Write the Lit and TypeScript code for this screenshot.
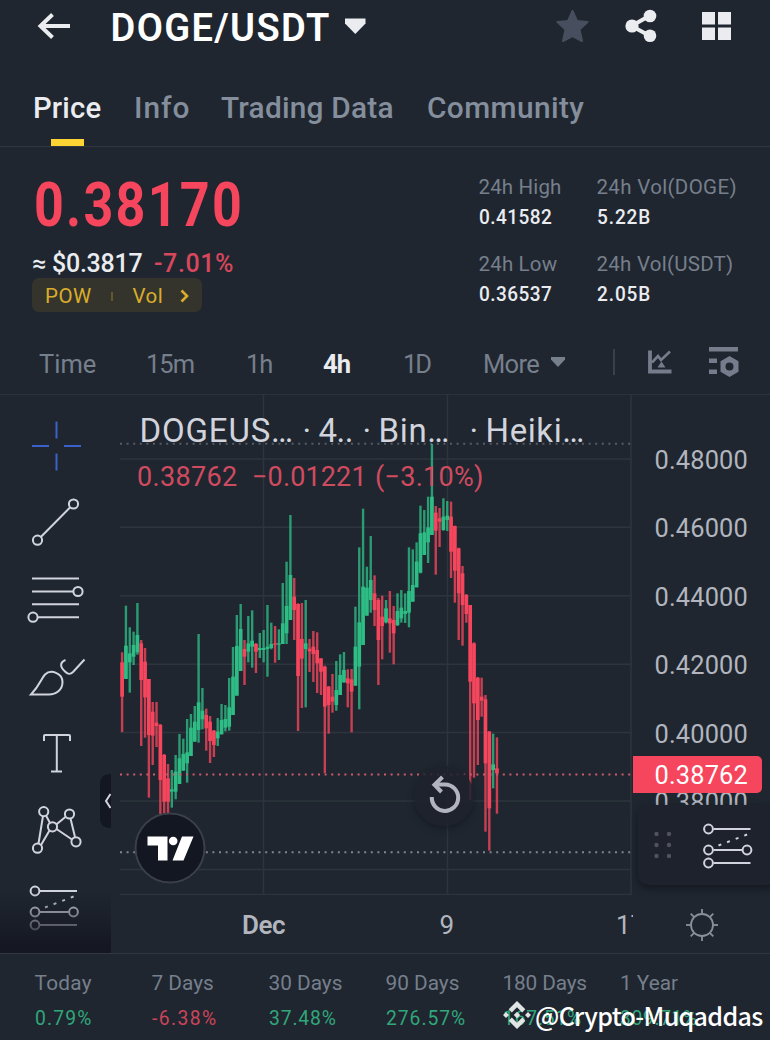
import { LitElement, html, svg, css } from "lit";
import { customElement, property } from "lit/decorators.js";

/** Single-line label tracked so that its text spans a given width. */
@customElement("fit-label")
class FitLabel extends LitElement {
  @property() text = "";
  @property({ type: Number }) width = 50;
  @property({ type: Number }) stretch = 1;

  static styles = css`
    :host { display: block; white-space: pre; }
    .t { display: inline-block; transform-origin: 0 50%; }
  `;

  updated() {
    const el = this.renderRoot.querySelector(".t") as HTMLElement;
    el.style.letterSpacing = "0px";
    const natural = el.offsetWidth;
    const gaps = Math.max(1, this.text.length - 1);
    el.style.letterSpacing = (this.width / this.stretch - natural) / gaps + "px";
    el.style.transform = this.stretch === 1 ? "none" : `scaleX(${this.stretch})`;
    this.style.width = this.width + "px";
  }

  render() {
    return html`<span class="t">${this.text}</span>`;
  }
}

const fit = (text: string, width: number, cls = "", stretch = 1) =>
  html`<fit-label class=${cls} .text=${text} .width=${width} .stretch=${stretch}></fit-label>`;

type Candle = [string, number, number, number, number];

// direction, high, body top, body bottom, low; thirds of a pixel below `base`
const FIRST: Candle[] = [
  ["r", 457, 487, 590, 696], ["g", 317, 437, 537, 537], ["g", 382, 460, 487, 578], ["g", 395, 435, 470, 495],
  ["g", 309, 405, 457, 464], ["r", 420, 430, 540, 738], ["r", 444, 485, 592, 713], ["r", 537, 537, 705, 893],
  ["r", 606, 635, 707, 795], ["r", 606, 668, 678, 741], ["r", 672, 675, 840, 942], ["r", 762, 765, 905, 940],
  ["r", 792, 835, 905, 940], ["g", 810, 868, 875, 923], ["g", 765, 815, 875, 898], ["g", 702, 775, 852, 852],
  ["g", 716, 762, 812, 812], ["g", 657, 757, 790, 848], ["g", 642, 683, 768, 768], ["g", 618, 665, 725, 725],
  ["g", 402, 607, 690, 728], ["g", 564, 632, 658, 688], ["r", 626, 645, 685, 752], ["r", 648, 665, 723, 789],
  ["r", 690, 692, 735, 771], ["g", 654, 695, 715, 738], ["g", 612, 660, 703, 703], ["g", 615, 657, 683, 694],
  ["g", 534, 622, 680, 692], ["g", 441, 530, 645, 645], ["g", 345, 438, 587, 587], ["g", 312, 387, 513, 513],
  ["r", 420, 447, 470, 555], ["g", 348, 430, 455, 487], ["g", 331, 422, 440, 503], ["r", 429, 432, 455, 519],
  ["g", 399, 444, 450, 474], ["g", 390, 444, 450, 487], ["g", 315, 440, 447, 530], ["g", 368, 432, 444, 448],
  ["r", 378, 430, 434, 488], ["g", 388, 430, 434, 480], ["g", 249, 370, 432, 432], ["g", 185, 318, 400, 432],
  ["g", 45, 225, 360, 360], ["r", 234, 290, 330, 420], ["r", 310, 312, 528, 693], ["r", 309, 417, 476, 624],
  ["g", 300, 430, 447, 622], ["r", 417, 446, 454, 516], ["r", 393, 440, 462, 546],
];
const SECOND: Candle[] = [
  ["r", 427, 480, 520, 609], ["r", 505, 505, 545, 615], ["r", 527, 530, 650, 850], ["r", 588, 590, 645, 731],
  ["r", 552, 620, 635, 668], ["g", 513, 600, 645, 662], ["g", 493, 555, 615, 615], ["g", 486, 540, 577, 578],
  ["r", 538, 565, 580, 652], ["r", 537, 568, 605, 727], ["g", 350, 470, 587, 587], ["g", 172, 397, 530, 658],
  ["g", 56, 290, 465, 465], ["g", 230, 293, 377, 377], ["g", 138, 270, 330, 368], ["r", 256, 310, 360, 408],
  ["r", 324, 330, 450, 585], ["r", 317, 380, 408, 508], ["g", 330, 355, 397, 400], ["r", 303, 385, 400, 488],
  ["r", 348, 390, 430, 523], ["g", 310, 363, 405, 408], ["g", 300, 353, 385, 398], ["g", 310, 363, 372, 399],
  ["g", 172, 303, 368, 412], ["g", 178, 285, 335, 335], ["g", 157, 215, 292, 292], ["g", 47, 130, 248, 250],
  ["g", 60, 127, 195, 195], ["g", 20, 112, 157, 219], ["g", -138, 20, 135, 135], ["r", 48, 68, 122, 254],
  ["r", 54, 85, 95, 171], ["g", 25, 80, 120, 122], ["g", 33, 77, 90, 123], ["r", 35, 80, 185, 264],
  ["r", 107, 108, 242, 338], ["r", 173, 175, 310, 450], ["r", 228, 250, 345, 467], ["r", 312, 315, 372, 398],
  ["r", 345, 345, 575, 930], ["r", 457, 460, 640, 863], ["r", 561, 563, 690, 825], ["r", 563, 620, 632, 680],
  ["r", 615, 628, 820, 1025], ["r", 723, 725, 955, 1082], ["g", 731, 823, 840, 895], ["r", 742, 835, 850, 971],
];

const drawCandles = (list: Candle[], start: number, base: number) =>
  list.map(([dir, hi, top, bot, lo], i) => {
    const x = 122.1 + (start + i) * 3.825;
    const y = (v: number) => base + v / 3;
    return svg`<g class=${dir === "r" ? "down" : "up"}>
      <rect class="wick" x=${x - 1.2} y=${y(hi)} width="2.4" height=${(lo - hi) / 3}></rect>
      <rect x=${x - 1.85} y=${y(top)} width="3.7" height=${(bot - top) / 3}></rect>
    </g>`;
  });

const GRID_Y = [459, 527.3, 595.8, 664.2, 732.6, 801, 869.4];

const channelIcon = svg`
  <path d="M40 891H77M40 912H69M40 925H77"></path>
  <path d="M45 907.5L75 896" stroke-dasharray="3 6.2"></path>
  <circle cx="35" cy="891" r="4.400"></circle><circle cx="35" cy="912" r="4.400"></circle>
  <circle cx="73.500" cy="912" r="4.400"></circle><circle cx="35" cy="925" r="4.400"></circle>`;

@customElement("app-root")
class AppRoot extends LitElement {
  static styles = css`
    :host { display: block; font-family: Roboto, sans-serif; color: #eaecef; }
    * { box-sizing: border-box; }
    svg { display: block; flex: none; }
    .page { width: 770px; height: 1040px; background: #1f262f; overflow: hidden; }
    .header { height: 52px; padding-left: 36px; display: grid; grid-template-columns: 74.5px 233.5px 212px 69px 76px 1fr; align-items: center; }
    .title { font-size: 38px; line-height: 48px; padding-top: 4px; font-weight: 600; color: #fff; }
    .tabs { height: 95px; border-bottom: 1px solid #303740; padding: 35px 0 0 33px; display: grid; grid-template-columns: 100.5px 87.5px 205.5px 1fr; align-items: start; }
    .tab { font-size: 28.7px; line-height: 42px; font-weight: 500; color: #848e9c; }
    .on { color: #eaecef; }
    .bar { width: 33px; height: 7px; margin: 10px 0 0 17.5px; background: #fcd535; }
    .ticker { height: 186px; padding: 24px 0 0 32px; display: grid; grid-template-columns: 446.5px 118px 1fr; }
    .ticker .stats { margin-top: -1px; }
    .last { font-size: 60.5px; line-height: 70px; font-weight: 700; color: #f6465d; margin-left: 1.5px; }
    .sub { display: flex; gap: 11px; font-size: 25px; line-height: 34px; font-weight: 500; margin-top: 5.5px; }
    .loss { color: #d9475d; }
    .chips { display: flex; align-items: center; width: 170px; height: 34px; margin-top: -2.5px; border-radius: 7px; background: #35342c; color: #d9ad2b; font-size: 20.5px; line-height: 26px; padding: 2px 0 0 13px; }
    .chips .bit { width: 1.5px; height: 9px; background: #66572c; margin: 0 20px 0 20px; }
    .chips svg { margin-left: 17px; }
    .pair { height: 77px; }
    .name { font-size: 20.5px; line-height: 34px; color: #767f8c; }
    .num { font-size: 20px; line-height: 26px; font-weight: 500; color: #eaecef; }
    .frames { height: 61px; padding-left: 39px; display: grid; grid-template-columns: 107px 100px 77px 80px 80px 68px 62px 34px 61px 1fr; align-items: center; font-size: 25.5px; color: #767f8c; }
    .frames .on { font-weight: 700; color: #eaecef; }
    .frames svg { margin-bottom: 3px; }
    .rule { width: 1.5px; height: 26px; background: #38404a; margin-top: -3px; }
    .chart { height: 560px; border-top: 1px solid #2a313a; border-bottom: 1px solid #303740; display: grid; grid-template-columns: 111px 1fr; position: relative; }
    .tools { position: relative; display: flex; flex-direction: column; }
    .tools svg, .float svg { fill: none; stroke: #d1d4dc; stroke-width: 2; }
    .tools .cross { stroke: #3b62cc; }
    .fade { position: absolute; left: 0; right: 0; bottom: 0; height: 62px; background: linear-gradient(#14172200, #151823 88%); }
    .handle { position: absolute; right: 0; top: 379px; width: 11px; height: 54px; border-radius: 9px 0 0 9px; background: #131722; }
    .main { padding-left: 9px; display: grid; grid-template: 500px 58px / 512px 1fr; position: relative; }
    .up { fill: #2ebd85; }
    .down { fill: #f6465d; }
    .wick { opacity: 0.78; }
    .axis { padding: 49px 0 0 22.5px; height: 410px; overflow: hidden; font-size: 25.4px; line-height: 32px; color: #b2b5be; display: flex; flex-direction: column; gap: 36.4px; }
    .dates { display: grid; grid-template-columns: 197.5px 176.5px 16px; align-items: center; font-size: 26px; color: #b2b5be; padding: 2px 0 0 122px; width: 513px; overflow: hidden; }
    .dates .bold { font-weight: 600; }
    .gear { padding: 12px 0 0 52px; }
    .legend { position: absolute; left: 28.5px; top: 15px; display: flex; font-size: 33px; line-height: 42px; color: #d1d4dc; }
    .legend .a { margin-right: 9px; }
    .legend .dot { margin-right: 8px; }
    .legend .gap { margin-left: 11px; }
    .change { position: absolute; left: 26px; top: 62px; display: flex; font-size: 27px; line-height: 40px; color: #cf4b60; }
    .change .b { margin: 0 8px 0 15px; }
    .tag { position: absolute; left: 522px; top: 361px; width: 129px; height: 37px; padding-left: 21.5px; line-height: 39px; font-size: 25.4px; border-radius: 0 5px 5px 0; background: #f6465d; color: #fff; }
    .brand { position: absolute; left: 23px; top: 416.5px; }
    .reset { position: absolute; left: 303px; top: 371px; width: 60px; height: 60px; border-radius: 50%; background: #1e222ddd; box-shadow: 0 3px 6px #12151d99; }
    .float { position: absolute; left: 527px; top: 410px; width: 140px; height: 80px; border-radius: 10px; background: #1e222d; box-shadow: 0 3px 7px #11141ccc; display: flex; align-items: center; }
    .float .grip { fill: #50535e; stroke: none; }
    .returns { position: relative; height: 85px; padding: 15px 0 0 34.5px; display: grid; grid-template-columns: 117px 117px 117px 117px 117.5px 1fr; align-items: start; }
    .returns .name { font-size: 20.8px; line-height: 28px; }
    .pct { font-size: 20.3px; line-height: 26px; margin-top: 7.5px; }
    .gain { color: #31a67b; }
    .drop { color: #cc445a; }
    .mark { position: absolute; left: 503px; top: 41.5px; display: flex; align-items: center; gap: 4px; color: #fff; font-family: "Noto Sans CJK SC", sans-serif; font-size: 25px; line-height: 40px; font-weight: 500; }
    .mark fit-label { margin-top: -1px; }
  `;

  render() {
    return html`<div class="page">
      ${this.header()} ${this.tabs()} ${this.ticker()} ${this.frames()}
      <div class="chart">${this.tools()} ${this.plot()}</div>
      ${this.returns()}
    </div>`;
  }

  header() {
    return html`<div class="header">
      <svg width="36" height="28" viewBox="36 12 36 28" fill="none" stroke="#eaecef" stroke-width="4"><path d="M70 26H41M52.500 14.500L40.500 26L52.500 37.500"></path></svg>
      ${fit("DOGE/USDT", 219, "title")}
      <svg width="22" height="18" viewBox="344 17.500 22 18" fill="#eaecef"><path d="M345 19H365.500V24L355.300 34.500L345 24Z"></path></svg>
      <svg width="34" height="36" viewBox="556 8.500 34 36" fill="#474f5e" stroke="#474f5e" stroke-width="2" stroke-linejoin="round"><path d="M572.500 11.500L577 21.500L587.500 22.500L579.500 30L582 41.500L572.500 36.500L563 41.500L565.500 30L557.500 22.500L568 21.500Z"></path></svg>
      <svg width="34" height="34" viewBox="625 9 34 34" fill="#eaecef"><path d="M650 15.500L631.500 26L650 36" fill="none" stroke="#eaecef" stroke-width="4"></path><circle cx="650" cy="16" r="6.300"></circle><circle cx="632" cy="26" r="6.600"></circle><circle cx="650" cy="35.800" r="6.300"></circle></svg>
      <svg width="30" height="30" viewBox="701 11 30 30" fill="#eaecef"><path d="M702 12h13v12.500h-13zM718 12h13v12.500h-13zM702 27.500h13v12.500h-13zM718 27.500h13v12.500h-13z"></path></svg>
    </div>`;
  }

  tabs() {
    return html`<div class="tabs">
      <div>${fit("Price", 68, "tab on", 1.02)}<div class="bar"></div></div>
      ${fit("Info", 56, "tab", 1.04)} ${fit("Trading Data", 173, "tab", 1.04)} ${fit("Community", 157, "tab", 1.04)}
    </div>`;
  }

  ticker() {
    const pair = (a: string, aw: number, b: string, bw: number) =>
      html`<div class="pair">${fit(a, aw, "name")}${fit(b, bw, "num", 0.95)}</div>`;
    return html`<div class="ticker">
      <div>
        ${fit("0.38170", 208, "last", 0.86)}
        <div class="sub">${fit("≈ $0.3817", 111)}${fit("-7.01%", 79, "loss")}</div>
        <div class="chips">${fit("POW", 46)}<div class="bit"></div>${fit("Vol", 30)}
          <svg width="10" height="14" viewBox="180 289 10 14" fill="none" stroke="#d9ad2b" stroke-width="2.600"><path d="M181.500 290.500L187 296L181.500 301.500"></path></svg>
        </div>
      </div>
      <div class="stats">${pair("24h High", 83, "0.41582", 73)}${pair("24h Low", 79, "0.36537", 73)}</div>
      <div class="stats">${pair("24h Vol(DOGE)", 140, "5.22B", 53)}${pair("24h Vol(USDT)", 137, "2.05B", 53)}</div>
    </div>`;
  }

  frames() {
    return html`<div class="frames">
      ${fit("Time", 57)} ${fit("15m", 49)} ${fit("1h", 27)} ${fit("4h", 28, "on")} ${fit("1D", 29)} ${fit("More", 57)}
      <svg width="15" height="12" viewBox="551 356 15 12" fill="#767f8c"><path d="M551 357H565V359.500L558 367L551 359.500Z"></path></svg>
      <div class="rule"></div>
      <svg width="26" height="28" viewBox="647 347.500 26 28" fill="none" stroke="#767c8c"><path d="M650 350V371H671.500" stroke-width="3.800"></path><path d="M652 362L658 355.500L661 359.500L670 351" stroke-width="2.600"></path><path d="M657.500 367L661.500 361L665.500 367Z" fill="#767c8c" stroke="none"></path></svg>
      <svg width="32" height="34" viewBox="708 346 32 34" fill="#767c8c"><path d="M709 348H738V352.500H709zM709 359.500H717V364H709zM709 370.500H717V375H709z"></path><path fill-rule="evenodd" d="M729.500 357L738.500 362.200V372.800L729.500 378L720.500 372.800V362.200ZM729.500 363.500A4 4 0 1 0 729.500 371.500A4 4 0 1 0 729.500 363.500Z"></path></svg>
    </div>`;
  }

  tools() {
    return html`<div class="tools">
      <svg class="cross" width="111" height="90" viewBox="0 395 111 90"><path d="M32 446H49M64 446H81M56.500 421.500V438.500M56.500 453.500V470.500"></path></svg>
      <svg width="111" height="75" viewBox="0 485 111 75"><path d="M40.800 537L70.200 507.300"></path><circle cx="37.500" cy="540.200" r="4.600"></circle><circle cx="73.500" cy="504" r="4.600"></circle></svg>
      <svg width="111" height="80" viewBox="0 560 111 80"><path d="M32 578.500H79M32 591.500H73M32 604.300H79M38 617.200H79"></path><circle cx="78" cy="591.500" r="4.600"></circle><circle cx="33" cy="617.200" r="4.600"></circle></svg>
      <svg width="111" height="70" viewBox="0 640 111 70"><path d="M31 694.500C40 685 41 679 45 674.500C51 669 62.500 673 62.500 682C62.500 690 56 694.500 49 694.500Z"></path><path d="M65.500 660C59.500 662.500 60 667 65 671.500C68 674.500 70 675 73 672L84.500 659.500"></path></svg>
      <svg width="111" height="75" viewBox="0 710 111 75"><path d="M44 741V736Q44 735 45 735H69Q70 735 70 736V741M56.800 735V771.500M51 771.500H62"></path></svg>
      <svg width="111" height="85" viewBox="0 785 111 85"><path d="M43 816L38.500 843.500M46 815.500L50 823M41 845L49.500 830.500M56.300 824.500L66 816.500M70.500 818.500L75 837M56.500 829L72 839.500"></path><circle cx="43.700" cy="811.600" r="4.600"></circle><circle cx="69.500" cy="814" r="4.600"></circle><circle cx="52.500" cy="826.800" r="4.600"></circle><circle cx="37.500" cy="848.200" r="4.600"></circle><circle cx="76" cy="841.800" r="4.600"></circle></svg>
      <svg width="111" height="83" viewBox="0 870 111 83">${channelIcon}</svg>
      <div class="fade"></div>
      <div class="handle"><svg width="11" height="54" viewBox="0 0 11 54"><path d="M10.500 20L6 27L10.500 34"></path></svg></div>
    </div>`;
  }

  plot() {
    return html`<div class="main">
      <svg width="512" height="500" viewBox="120 395 512 500">
        <g stroke="#2d343d" stroke-width="1.500">
          ${GRID_Y.map((y) => svg`<path d="M120 ${y}H631"></path>`)}
          ${[263.5, 447.5, 631].map((x) => svg`<path d="M${x} 395V895"></path>`)}
          <path d="M120 894.500H632"></path>
        </g>
        <g stroke-width="2" stroke-dasharray="2 4.600">
          <path stroke="#565c66" d="M120 443.800H631"></path>
          <path stroke="#80868f" d="M120 852.300H631"></path>
        </g>
        ${drawCandles(FIRST, 0, 500)} ${drawCandles(SECOND, FIRST.length, 490)}
        <path stroke="#cf5a6c" stroke-width="2" stroke-dasharray="2 4.600" d="M120 774.600H631"></path>
      </svg>
      <div class="axis">${["0.48000", "0.46000", "0.44000", "0.42000", "0.40000", "0.38000"].map((p) => fit(p, 93))}</div>
      <div class="dates">${fit("Dec", 43, "bold")}${fit("9", 14)}${fit("17", 29)}</div>
      <div class="gear"><svg width="36" height="36" viewBox="-18 -18 36 36" fill="none" stroke="#8b8f99" stroke-width="1.800"><circle r="11"></circle>
        ${[0, 45, 90, 135, 180, 225, 270, 315].map((a) => svg`<path d="M0 -11V-16" transform="rotate(${a})"></path>`)}</svg></div>
      <div class="legend">${fit("DOGEUS…", 154, "a")}${fit("·", 8, "dot")}${fit("4..", 35, "a")}${fit("·", 8, "dot")}${fit("Bin…", 71, "a")}${fit("·", 8, "dot gap")}${fit("Heiki…", 99)}</div>
      <div class="change">${fit("0.38762", 100)}${fit("−0.01221", 115, "b")}${fit("(−3.10%)", 109)}</div>
      <div class="tag">${fit("0.38762", 93)}</div>
      <svg class="brand" width="72" height="72" viewBox="-36 -36 72 72"><circle r="34.500" fill="#131722" stroke="#3a3f4a" stroke-width="2"></circle><path fill="#fff" d="M-22.500 -11.500H-2.500V12.500H-12V-2.500H-22.500ZM12 -11.500H23.500L13.500 12.500H2.500Z"></path><circle fill="#fff" cx="3.200" cy="-7" r="4.300"></circle></svg>
      <div class="reset"><svg width="60" height="60" viewBox="414 766 60 60" fill="none" stroke="#b2b5be" stroke-width="4"><path d="M431.800 797A13.200 13.200 0 1 0 445 784.500H436"></path><path d="M442.500 777L434.500 784.700L441.500 792"></path></svg></div>
      <div class="float">
        <svg class="grip" width="50" height="80" viewBox="638 805 50 80">${[656.5, 669].map((x) => [834, 845, 856].map((y) => svg`<circle cx=${x} cy=${y} r="2.200"></circle>`))}</svg>
        <svg width="80" height="80" viewBox="14.500 867 80 80">${channelIcon}</svg>
      </div>
    </div>`;
  }

  returns() {
    const cell = (a: string, aw: number, b: string, bw: number, cls = "gain") =>
      html`<div>${fit(a, aw, "name")}${fit(b, bw, "pct " + cls, 0.95)}</div>`;
    return html`<div class="returns">
      ${cell("Today", 57, "0.79%", 56)} ${cell("7 Days", 62, "-6.38%", 64, "drop")} ${cell("30 Days", 74, "37.48%", 67)}
      ${cell("90 Days", 74, "276.57%", 79)} ${cell("180 Days", 85, "167.51%", 78)} ${cell("1 Year", 58, "309.71%", 77)}
      <div class="mark">
        <svg width="28" height="28" viewBox="-14 -14 28 28" fill="#e2e3e4"><path d="M0 -14L8.300 -5.700L5.200 -2.600L0 -7.800L-5.200 -2.600L-8.300 -5.700ZM0 14L8.300 5.700L5.200 2.600L0 7.800L-5.200 2.600L-8.300 5.700ZM0 -3.200L3.200 0L0 3.200L-3.200 0ZM-11 -3L-8 0L-11 3L-14 0ZM11 -3L14 0L11 3L8 0Z"></path></svg>
        ${fit("@Crypto-Muqaddas", 228)}
      </div>
    </div>`;
  }
}
